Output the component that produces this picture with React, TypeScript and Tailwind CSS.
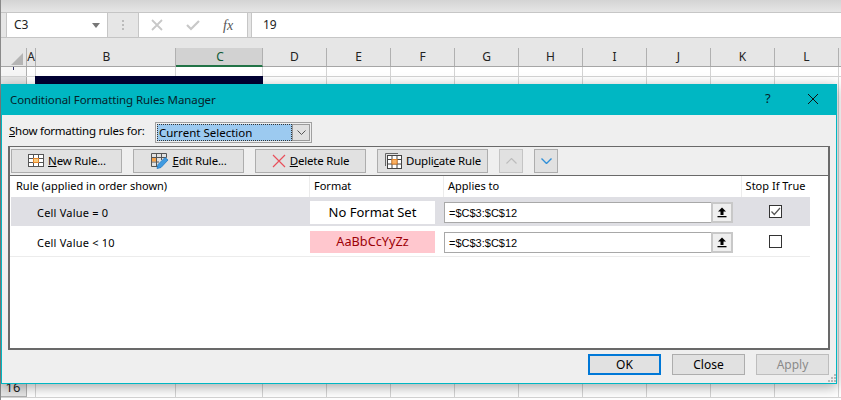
import React from "react";

const cols: [string, number][] = [["A", 9], ["B", 140], ["C", 87], ["D", 64], ["E", 64], ["F", 64], ["G", 64], ["H", 64], ["I", 64], ["J", 64], ["K", 64], ["L", 64]];

function GridIcon() {
  return (
    <svg width="18" height="16" viewBox="0 0 18 16" className="shrink-0">
      <rect x="1.5" y="1.5" width="15" height="12" fill="#fff" stroke="#555" />
      <path d="M1.5 5.5H16.5M1.5 9.5H16.5M6.5 1.5V13.5M11.5 1.5V13.5" stroke="#555" fill="none" />
      <rect x="6.5" y="5.5" width="5" height="4" fill="#fbcf7d" stroke="#e8862a" />
    </svg>
  );
}

function EditIcon() {
  return (
    <svg width="19" height="18" viewBox="0 0 19 18" className="shrink-0">
      <path d="M1.5 1.5H16.5V5.5M1.5 1.5V14.5H8M1.5 5.5H16.5M6.5 1.5V14.5M11.5 1.5V8M1.5 10H9" stroke="#555" fill="none" />
      <rect x="2" y="6" width="4" height="3.5" fill="#f5a24a" />
      <path d="M7 16.5L8 12.5L15 5.5L18 8L11 15.5Z" fill="#3f9ae0" stroke="#1f78c4" strokeWidth="0.8" />
    </svg>
  );
}

function DupIcon() {
  return (
    <svg width="19" height="18" viewBox="0 0 19 18" className="shrink-0">
      <path d="M1.5 14V1.5H14" stroke="#666" fill="none" />
      <rect x="3.5" y="3.5" width="14" height="13" fill="#fff" stroke="#444" />
      <path d="M3.5 7.5H17.5M3.5 12H17.5M8 3.5V16.5M13 3.5V16.5" stroke="#444" fill="none" />
      <rect x="8" y="7.5" width="5" height="4.5" fill="#f7b267" stroke="#e8862a" />
    </svg>
  );
}

function UploadBtn() {
  return (
    <div className="w-[22px] h-full shrink-0 bg-[#efefef] border-[2px] border-[#c8c8c8] flex items-center justify-center">
      <svg width="10" height="11" viewBox="0 0 10 11">
        <path d="M5 0.5L9 4.5H6.5V8H3.5V4.5H1Z" fill="#000" />
        <rect x="0.5" y="9" width="9" height="1.3" fill="#000" />
      </svg>
    </div>
  );
}

function Btn({ icon, children }: { icon: React.ReactNode; children: React.ReactNode }) {
  return (
    <div className="w-[111px] h-[24px] bg-[#e1e1e1] border border-[#adadad] flex items-center justify-center gap-[3px] text-[11.5px] tracking-[-0.2px] whitespace-nowrap">
      {icon}
      <span>{children}</span>
    </div>
  );
}

function Row({ gray, format, check }: { gray?: boolean; format: React.ReactNode; check?: boolean }) {
  return (
    <div className={`ml-[1px] w-[799px] h-[29px] flex items-start mb-[1px] ${gray ? "bg-[#dfdfe4]" : ""}`}>
      {format}
      <div className="ml-[9px] mt-[5px] w-[289px] h-[21px] bg-white border border-[#a8a8a8] border-r-0 flex text-[11px]">
        <div className="flex-1 pl-[4px] leading-[20px]" style={{ fontFamily: '"Liberation Sans", sans-serif' }}>=$C$3:$C$12</div>
        <div className="-my-[1px]"><UploadBtn /></div>
      </div>
      <div className="ml-[9px] w-[67px] flex justify-center mt-[8px]">
        <div className="w-[13px] h-[13px] bg-white border border-[#333] flex items-center justify-center">
          {check && (
            <svg width="11" height="11" viewBox="0 0 11 11">
              <path d="M1.5 5.5L4.3 8.5L10 2" stroke="#555" strokeWidth="1.2" fill="none" />
            </svg>
          )}
        </div>
      </div>
    </div>
  );
}

export default function App() {
  return (
    <div className="relative w-[841px] h-[400px] overflow-hidden bg-white text-black" style={{ fontFamily: '"Noto Sans", sans-serif' }}>
      {/* Excel window */}
      <div className="h-[12px] bg-gradient-to-b from-[#d4d4d4] to-[#e6e6e6]" />
      <div className="h-[26px] bg-[#e6e6e6] border-y border-[#c4c4c4] flex items-stretch relative">
        <div className="-my-[1px] ml-[6px] w-[102px] bg-white border border-[#c6c6c6] flex items-center justify-between pl-[7px] pr-[7px] text-[12px] text-[#222]">
          <span>C3</span>
          <svg width="8" height="5" viewBox="0 0 8 5"><path d="M0 0H8L4 5Z" fill="#777" /></svg>
        </div>
        <div className="w-[30px] flex flex-col items-center justify-center gap-[2px]">
          <div className="w-[2px] h-[2px] bg-[#bbb]" />
          <div className="w-[2px] h-[2px] bg-[#bbb]" />
          <div className="w-[2px] h-[2px] bg-[#bbb]" />
        </div>
        <div className="-my-[1px] w-[110px] bg-white border border-[#c6c6c6] flex items-center">
          <svg width="12" height="12" viewBox="0 0 12 12" className="ml-[12px]"><path d="M1 1L11 11M11 1L1 11" stroke="#c8c8c8" strokeWidth="1.8" /></svg>
          <svg width="14" height="12" viewBox="0 0 14 12" className="ml-[23px]"><path d="M1 6L5 10L13 2" stroke="#c8c8c8" strokeWidth="2.2" fill="none" /></svg>
          <span className="ml-[23px] text-[14px] italic text-[#555]" style={{ fontFamily: '"Liberation Serif", serif' }}>fx</span>
        </div>
        <div className="-my-[1px] ml-[3px] flex-1 bg-white border border-[#c6c6c6] border-r-0 flex items-center pl-[11px] text-[12px] text-[#222]">19</div>
      </div>
      <div className="h-[10px] bg-[#e6e6e6]" />
      {/* Column headers */}
      <div className="h-[19px] bg-[#e6e6e6] flex border-b-[1px] border-[#a6a6a6] text-[12px] text-[#222]">
        <div className="w-[27px] shrink-0 relative border-r border-[#b0b0b0]">
          <svg width="13" height="12" viewBox="0 0 13 12" className="absolute left-[11px] top-[5px]"><path d="M12 0V12H0Z" fill="#b4b4b4" /></svg>
        </div>
        {cols.map(([c, w]) => (
          <div key={c} style={{ width: w }} className={`shrink-0 flex items-center justify-center border-r border-[#b0b0b0] ${c === "C" ? "bg-[#d2d2d2] border-b-2 border-b-[#217346] -mb-[1px] text-[#0f5a34] pl-[2px]" : ""} ${c === "B" ? "pl-[2px]" : ""}`}>{c}</div>
        ))}
      </div>
      {/* Rows */}
      <div className="flex h-[10px] border-b border-[#d4d4d4]">
        <div className="w-[27px] shrink-0 bg-[#f6f6f6] border-r border-[#b0b0b0] flex justify-center"><div className="w-[1px] h-[3px] bg-[#336]" /></div>
        {cols.map(([c, w]) => (<div key={c} style={{ width: w }} className="shrink-0 border-r border-[#d4d4d4]" />))}
      </div>
      <div className="flex h-[321px] border-b border-[#d4d4d4]">
        <div className="w-[27px] shrink-0 bg-[#e6e6e6] border-r border-[#b0b0b0] border-b border-b-[#b0b0b0] flex items-end justify-center text-[13px] text-[#222] leading-[17px]">16</div>
        {cols.map(([c, w]) => (<div key={c} style={{ width: w }} className="shrink-0 border-r border-[#d4d4d4]" />))}
      </div>
      {/* Navy banner cell in the sheet, behind the dialog */}
      <div className="absolute left-[35px] top-[76px] w-[228px] h-[10px] bg-[#000033]" />
      {/* Window edge */}
      <div className="absolute left-0 top-0 w-[1px] h-[400px] bg-[#8a8a8a]" />

      {/* Dialog */}
      <div className="absolute left-[1px] top-[84px] w-[836px] h-[300px] bg-[#00b7c3] flex flex-col shadow-[0_3px_12px_rgba(0,0,0,0.35)]">
        <div className="h-[31px] shrink-0 flex items-center pl-[9px] text-[11.5px] text-[#06222a] relative whitespace-nowrap">
          <span className="tracking-[-0.1px]">Conditional Formatting Rules Manager</span>
          <span className="absolute left-[764px] top-[5px] text-[13px]">?</span>
          <svg width="12" height="12" viewBox="0 0 12 12" className="absolute left-[806px] top-[9px]"><path d="M1 1L11 11M11 1L1 11" stroke="#111" strokeWidth="1" fill="none" /></svg>
        </div>
        <div className="flex-1 mx-[1px] mb-[1px] bg-[#efefef] relative flex flex-col">
          <div className="flex items-start pt-[7px] pl-[7px] h-[31px] text-[11.5px]">
            <span className="w-[146px] leading-[18px] whitespace-nowrap tracking-[-0.25px]"><u>S</u>how formatting rules for:</span>
            <div className="w-[157px] h-[21px] border border-[#a0a0a0] bg-[#efefef] p-[1px] flex">
              <div className="w-[135px] bg-[#9ccaf0] border border-dotted border-[#333] leading-[15px] pl-[1px] whitespace-nowrap">Current Selection</div>
              <div className="flex-1 bg-[#e0e0e0] border border-[#9a9a9a] flex items-center justify-center">
                <svg width="9" height="6" viewBox="0 0 9 6"><path d="M0.5 0.5L4.5 4.5L8.5 0.5" stroke="#555" fill="none" /></svg>
              </div>
            </div>
          </div>
          <div className="ml-[6px] w-[822px] h-[204px] border-x-2 border-b-2 border-t border-[#696969] flex flex-col">
            <div className="h-[29px] border-b border-[#696969] pt-[2px] pl-[1px] flex gap-[11px] items-start">
              <Btn icon={<GridIcon />}><u>N</u>ew Rule...</Btn>
              <Btn icon={<EditIcon />}><u>E</u>dit Rule...</Btn>
              <Btn icon={<svg width="14" height="14" viewBox="0 0 14 14" className="mr-[1px]"><path d="M1 1L13 13M13 1L1 13" stroke="#e8505b" strokeWidth="1.2" /></svg>}><u>D</u>elete Rule</Btn>
              <Btn icon={<DupIcon />}>Dupli<u>c</u>ate Rule</Btn>
              <div className="w-[24px] h-[24px] bg-[#e1e1e1] border border-[#c4c4c4] flex items-center justify-center">
                <svg width="11" height="6" viewBox="0 0 11 6"><path d="M0.5 5.5L5.5 0.5L10.5 5.5" stroke="#bcbcbc" strokeWidth="1.2" fill="none" /></svg>
              </div>
              <div className="w-[24px] h-[24px] bg-[#e1e1e1] border border-[#adadad] flex items-center justify-center">
                <svg width="11" height="6" viewBox="0 0 11 6"><path d="M0.5 0.5L5.5 5.5L10.5 0.5" stroke="#2f8fd8" strokeWidth="1.4" fill="none" /></svg>
              </div>
            </div>
            <div className="flex-1 bg-white">
              <div className="h-[21px] flex text-[11px] leading-[20px]">
                <div className="w-[300px] pl-[6px] border-r border-[#ececec]">Rule (applied in order shown)</div>
                <div className="w-[134px] pl-[4px] border-r border-[#ececec]">Format</div>
                <div className="w-[298px] pl-[4px] border-r border-[#ececec]">Applies to</div>
                <div className="w-[67px] text-center whitespace-nowrap">Stop If True</div>
              </div>
              <Row gray check format={
                <div className="w-[424px] flex shrink-0">
                  <div className="w-[299px] pl-[26px] pt-[8px] text-[11px] tracking-[0.2px]">Cell Value = 0</div>
                  <div className="w-[125px] h-[23px] mt-[4px] bg-white flex items-center justify-center text-[13px]">No Format Set</div>
                </div>
              } />
              <Row format={
                <div className="w-[424px] flex shrink-0">
                  <div className="w-[299px] pl-[26px] pt-[8px] text-[11px] tracking-[0.2px]">Cell Value &lt; 10</div>
                  <div className="w-[125px] h-[22px] mt-[4px] bg-[#ffc7ce] text-[#9c0006] flex items-center justify-center text-[12.7px]">AaBbCcYyZz</div>
                </div>
              } />
              <div className="w-[800px] h-[1px] -mt-[1px] bg-[#ececec]" />
            </div>
          </div>
          <div className="flex justify-end pr-[7px] pt-[4px] gap-[11px] text-[12px]">
            <div className="w-[73px] h-[21px] bg-[#e1e1e1] border-2 border-[#0078d7] flex items-center justify-center">OK</div>
            <div className="w-[73px] h-[21px] bg-[#e1e1e1] border border-[#adadad] flex items-center justify-center">Close</div>
            <div className="w-[73px] h-[21px] bg-[#e1e1e1] border border-[#bdbdbd] flex items-center justify-center text-[#8a8a8a]">Apply</div>
          </div>
          <svg width="9" height="9" viewBox="0 0 9 9" className="absolute right-[0px] bottom-[0px]">
            <path d="M7 0h2v2H7zM4 3h2v2H4zM7 3h2v2H7zM1 6h2v2H1zM4 6h2v2H4zM7 6h2v2H7z" fill="#b8b8b8" />
          </svg>
        </div>
      </div>
    </div>
  );
}
